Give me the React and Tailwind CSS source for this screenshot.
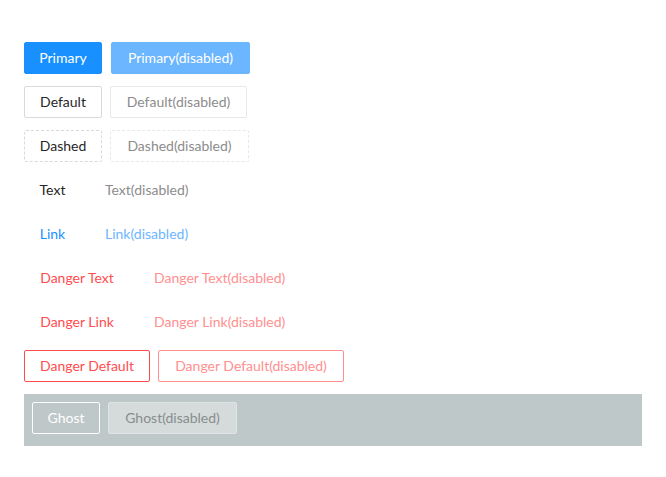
import React from 'react';

const base =
  'h-8 rounded-[2px] border text-[14px] leading-none flex items-center justify-center whitespace-nowrap shrink-0';

const Row = ({ children }) => <div className="flex gap-2 items-center">{children}</div>;

const App = () => {
  return (
    <div
      className="min-h-screen bg-white pt-[42px] px-6"
      style={{ fontFamily: 'Lato, "Noto Sans", sans-serif' }}
    >
      <div className="w-[618px] flex flex-col gap-3">
        <Row>
          <button className={`${base} w-[78px] bg-[#1890ff] border-[#1890ff] text-white`}>Primary</button>
          <button className={`${base} w-[139px] ml-px bg-[#6cb6ff] border-[#6cb6ff] text-white`}>
            Primary(disabled)
          </button>
        </Row>
        <Row>
          <button className={`${base} w-[78px] bg-white border-[#d9d9d9] text-[#262626]`}>Default</button>
          <button className={`${base} w-[137px] bg-white border-[#e8e8e8] text-[#8c8c8c]`}>
            Default(disabled)
          </button>
        </Row>
        <Row>
          <button className={`${base} w-[78px] bg-white border-dashed border-[#d9d9d9] text-[#262626]`}>
            Dashed
          </button>
          <button className={`${base} w-[139px] bg-white border-dashed border-[#e8e8e8] text-[#8c8c8c]`}>
            Dashed(disabled)
          </button>
        </Row>
        <Row>
          <button className={`${base} w-[57px] border-transparent text-[#262626]`}>Text</button>
          <button className={`${base} px-[15px] border-transparent text-[#8c8c8c]`}>Text(disabled)</button>
        </Row>
        <Row>
          <button className={`${base} w-[57px] border-transparent text-[#1890ff]`}>Link</button>
          <button className={`${base} px-[15px] border-transparent text-[#6cb6ff]`}>Link(disabled)</button>
        </Row>
        <Row>
          <button className={`${base} w-[106px] border-transparent text-[#ff4d4f]`}>Danger Text</button>
          <button className={`${base} px-[15px] border-transparent text-[#ff8f90]`}>
            Danger Text(disabled)
          </button>
        </Row>
        <Row>
          <button className={`${base} w-[106px] border-transparent text-[#ff4d4f]`}>Danger Link</button>
          <button className={`${base} px-[15px] border-transparent text-[#ff8f90]`}>
            Danger Link(disabled)
          </button>
        </Row>
        <Row>
          <button className={`${base} w-[126px] bg-white border-[#ff4d4f] text-[#ff4d4f]`}>
            Danger Default
          </button>
          <button className={`${base} w-[186px] bg-white border-[#ff8f90] text-[#ff8f90]`}>
            Danger Default(disabled)
          </button>
        </Row>
        <div className="bg-[#bec8c8] pt-2 pb-3 px-2 flex gap-2 items-center">
          <button className={`${base} w-[68px] bg-transparent border-white text-white`}>Ghost</button>
          <button className={`${base} w-[129px] bg-[#d5dbdb] border-[#dfe4e4] text-[#888d8d]`}>
            Ghost(disabled)
          </button>
        </div>
      </div>
    </div>
  );
};

export default App;
